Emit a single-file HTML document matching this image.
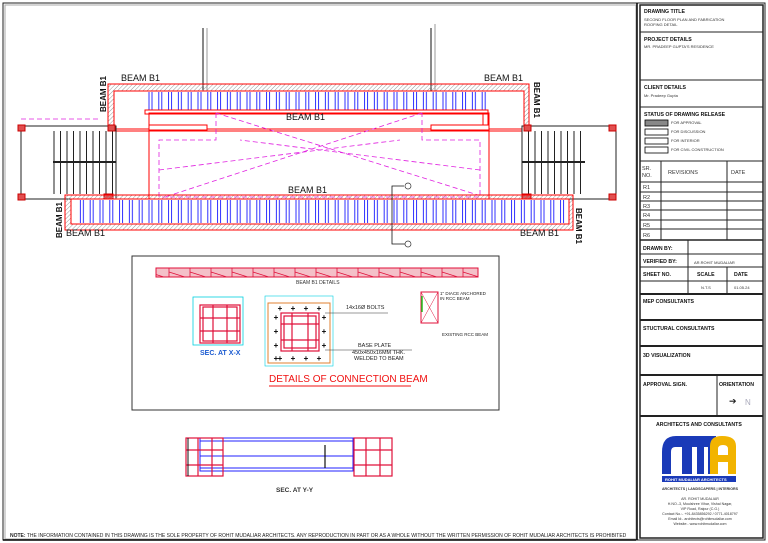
<!DOCTYPE html>
<html><head><meta charset="utf-8"><style>
html,body{margin:0;padding:0;background:#fff;}
svg{display:block;font-family:"Liberation Sans",sans-serif;}
</style></head><body>
<svg width="768" height="543" viewBox="0 0 768 543" xmlns="http://www.w3.org/2000/svg">
<defs>
<pattern id="bars" x="0" y="0" width="9.8" height="40" patternUnits="userSpaceOnUse">
<rect x="2" y="-1" width="3" height="42" fill="none" stroke="#1a1aff" stroke-width="0.9"/>
</pattern>
<pattern id="hatch" width="3" height="3" patternUnits="userSpaceOnUse" patternTransform="rotate(45)">
<line x1="0" y1="0" x2="0" y2="3" stroke="#999" stroke-width="1"/>
</pattern>
<pattern id="stairs" width="6.5" height="80" patternUnits="userSpaceOnUse">
<line x1="2" y1="0" x2="2" y2="80" stroke="#222" stroke-width="1"/>
</pattern>
<pattern id="rbars" width="21" height="10" patternUnits="userSpaceOnUse">
<path d="M1 0 V10 M1 2 L20 8" stroke="#e0103a" stroke-width="0.8" fill="none"/>
</pattern>
</defs>
<rect width="768" height="543" fill="#fff"/>
<rect x="3" y="3" width="762" height="537" fill="none" stroke="#222" stroke-width="1"/>
<rect x="5" y="5" width="631" height="534" fill="none" stroke="#aaa" stroke-width="1"/>
<line x1="3" y1="540" x2="636" y2="540" stroke="#000" stroke-width="1.5"/>
<line x1="637" y1="3" x2="637" y2="540" stroke="#000" stroke-width="1.5"/>

<g stroke="#111" stroke-width="1"><line x1="203" y1="28" x2="203" y2="107"/><line x1="207" y1="28" x2="207" y2="107" stroke="#999"/><line x1="431" y1="28" x2="431" y2="107"/><line x1="435" y1="24" x2="435" y2="107" stroke="#999"/></g>

<!-- top beam -->
<rect x="108" y="84" width="421" height="46" fill="url(#hatch)"/>
<rect x="114" y="91" width="410" height="39" fill="#fff"/>
<rect x="108" y="84" width="421" height="45" fill="none" stroke="#f00"/>
<rect x="114" y="91" width="410" height="40" fill="none" stroke="#f00"/>
<rect x="145" y="92" width="343" height="18" fill="url(#bars)"/>
<rect x="145" y="110" width="343" height="4" fill="none" stroke="#f00"/>
<line x1="483" y1="114" x2="483" y2="126" stroke="#f00"/><line x1="488" y1="114" x2="488" y2="126" stroke="#f00"/>
<!-- void -->
<rect x="149" y="113" width="340" height="87" fill="none" stroke="#f00"/>
<g stroke="#e020e0" stroke-width="0.8" stroke-dasharray="5,3" fill="none">
<path d="M21 119 H101"/><path d="M216 113 V140 H159 V197 H480 V140 H422 V113"/>
<line x1="216" y1="113" x2="478" y2="195"/><line x1="422" y1="113" x2="165" y2="197"/>
<line x1="159" y1="170" x2="400" y2="140"/><line x1="480" y1="170" x2="240" y2="140"/>
</g>
<rect x="149" y="125" width="58" height="5" fill="#fff" stroke="#f00"/>
<rect x="431" y="125" width="58" height="5" fill="#fff" stroke="#f00"/>
<!-- stairs -->
<rect x="21" y="126" width="95" height="73" fill="#fff" stroke="#222"/>
<rect x="53" y="131" width="63" height="63" fill="url(#stairs)"/>
<line x1="53" y1="162" x2="116" y2="162" stroke="#222" stroke-width="2"/>
<rect x="522" y="126" width="94" height="73" fill="#fff" stroke="#222"/>
<rect x="522" y="131" width="63" height="63" fill="url(#stairs)"/>
<line x1="522" y1="162" x2="585" y2="162" stroke="#222" stroke-width="2"/>
<g fill="#e05050" stroke="#c00"><rect x="18" y="125" width="7" height="6"/><rect x="108" y="125" width="7" height="6"/><rect x="18" y="194" width="7" height="6"/><rect x="104" y="194" width="9" height="6"/><rect x="524" y="125" width="7" height="6"/><rect x="609" y="125" width="7" height="6"/><rect x="522" y="194" width="9" height="6"/><rect x="609" y="194" width="7" height="6"/></g>
<!-- bottom beam -->
<rect x="65" y="195" width="508" height="35" fill="url(#hatch)"/>
<rect x="65" y="195" width="508" height="35" fill="none" stroke="#f00"/>
<rect x="71" y="199" width="498" height="25" fill="#fff" stroke="#f00"/>
<rect x="76" y="200" width="493" height="23" fill="url(#bars)"/>
<path d="M404 186 H392 V244 H405" fill="none" stroke="#111" stroke-width="0.8"/>
<circle cx="408" cy="186" r="3" fill="#fff" stroke="#333" stroke-width="0.7"/>
<circle cx="408" cy="244" r="3" fill="#fff" stroke="#333" stroke-width="0.7"/>
<g font-size="9" fill="#111">
<text x="121" y="81">BEAM B1</text><text x="484" y="81">BEAM B1</text>
<text x="286" y="120">BEAM B1</text><text x="288" y="193">BEAM B1</text>
<text x="66" y="236">BEAM B1</text><text x="520" y="236">BEAM B1</text>
<text transform="translate(106,112) rotate(-90)" font-size="8" font-weight="bold">BEAM B1</text>
<text transform="translate(62,238) rotate(-90)" font-size="8" font-weight="bold">BEAM B1</text>
<text transform="translate(534,82) rotate(90)" font-size="8" font-weight="bold">BEAM B1</text>
<text transform="translate(576,208) rotate(90)" font-size="8" font-weight="bold">BEAM B1</text>
</g>

<!-- detail box -->
<rect x="132" y="256" width="367" height="154" fill="none" stroke="#333"/>
<rect x="156" y="268" width="322" height="9" fill="#f4c0c8" stroke="#e0103a"/>
<rect x="156" y="268" width="322" height="9" fill="url(#rbars)"/>
<text x="296" y="284" font-size="5" fill="#333">BEAM B1 DETAILS</text>
<rect x="193" y="297" width="50" height="48" fill="none" stroke="#00d0e0" stroke-width="0.8"/>
<g stroke="#e0103a" stroke-width="1.2" fill="none"><rect x="200" y="305" width="40" height="38"/><rect x="203" y="307" width="34" height="34"/><line x1="200" y1="318" x2="240" y2="318"/><line x1="200" y1="331" x2="240" y2="331"/><line x1="213" y1="305" x2="213" y2="343"/><line x1="227" y1="305" x2="227" y2="343"/></g>
<text x="200" y="355" font-size="7" fill="#1a5ad0" font-weight="bold">SEC. AT X-X</text>
<rect x="268" y="303" width="62" height="60" fill="none" stroke="#e08030"/>
<rect x="265" y="296" width="68" height="70" fill="none" stroke="#00d0e0" stroke-width="0.6"/>
<g stroke="#e0103a" stroke-width="1.2" fill="none"><rect x="281" y="313" width="38" height="38"/><rect x="284" y="316" width="32" height="32"/><line x1="281" y1="324" x2="319" y2="324"/><line x1="281" y1="340" x2="319" y2="340"/><line x1="292" y1="313" x2="292" y2="351"/><line x1="308" y1="313" x2="308" y2="351"/></g>
<g font-size="8" fill="#000" text-anchor="middle" font-weight="bold">
<text x="280" y="311">+</text><text x="293" y="311">+</text><text x="306" y="311">+</text><text x="319" y="311">+</text>
<text x="276" y="320">+</text><text x="276" y="334">+</text><text x="276" y="348">+</text><text x="276" y="361">+</text>
<text x="324" y="320">+</text><text x="324" y="334">+</text><text x="324" y="348">+</text>
<text x="280" y="361">+</text><text x="293" y="361">+</text><text x="306" y="361">+</text><text x="319" y="361">+</text>
</g>
<line x1="325" y1="313" x2="388" y2="313" stroke="#333" stroke-width="0.6"/>
<line x1="325" y1="350" x2="412" y2="350" stroke="#333" stroke-width="0.6"/>
<g font-size="5.5" fill="#222"><text x="346" y="309">14x16Ø BOLTS</text><text x="358" y="347">BASE PLATE</text><text x="352" y="354">450x450x16MM THK.</text><text x="354" y="360">WELDED TO BEAM</text></g>
<rect x="421" y="292" width="17" height="31" fill="none" stroke="#e0103a"/>
<path d="M421 292 L438 323 M438 292 L421 323" stroke="#e0103a" stroke-width="0.5"/>
<line x1="422" y1="296" x2="422" y2="312" stroke="#20c020" stroke-width="1.5"/>
<g font-size="4.5" fill="#222"><text x="440" y="295">1" DIACE ANCHORED</text><text x="440" y="300">IN RCC BEAM</text><text x="442" y="336">EXISTING RCC BEAM</text></g>
<text x="269" y="382" font-size="10" fill="#f01010">DETAILS OF CONNECTION BEAM</text>
<line x1="269" y1="386" x2="411" y2="386" stroke="#f01010"/>
<!-- sec y-y -->
<rect x="200" y="438" width="153" height="18" fill="none" stroke="#2020ff"/>
<rect x="200" y="441" width="153" height="30" fill="none" stroke="#2020ff"/>
<line x1="200" y1="468" x2="353" y2="468" stroke="#2020ff"/>
<g stroke="#e0103a" stroke-width="1.2" fill="none">
<rect x="186" y="438" width="37" height="38"/><line x1="186" y1="450" x2="223" y2="450"/><line x1="186" y1="465" x2="223" y2="465"/><line x1="198" y1="438" x2="198" y2="476"/><line x1="212" y1="438" x2="212" y2="476"/>
<rect x="354" y="438" width="38" height="38"/><line x1="354" y1="450" x2="392" y2="450"/><line x1="354" y1="465" x2="392" y2="465"/><line x1="366" y1="438" x2="366" y2="476"/><line x1="380" y1="438" x2="380" y2="476"/>
</g>
<line x1="188" y1="438" x2="188" y2="476" stroke="#111"/>
<line x1="325" y1="445" x2="325" y2="468" stroke="#111" stroke-width="1.2"/>
<text x="276" y="492" font-size="6.5" fill="#333" font-weight="bold">SEC. AT Y-Y</text>

<text x="10" y="537" font-size="5" fill="#222"><tspan font-weight="bold">NOTE:</tspan> THE INFORMATION CONTAINED IN THIS DRAWING IS THE SOLE PROPERTY OF ROHIT MUDALIAR ARCHITECTS. ANY REPRODUCTION IN PART OR AS A WHOLE WITHOUT THE WRITTEN PERMISSION OF ROHIT MUDALIAR ARCHITECTS IS PROHIBITED</text>

<!-- title block -->
<g fill="none" stroke="#222" stroke-width="1">
<rect x="640" y="5" width="123" height="533" stroke-width="1.5"/>
<line x1="640" y1="32" x2="763" y2="32"/><line x1="640" y1="80" x2="763" y2="80"/>
<line x1="640" y1="107" x2="763" y2="107"/><line x1="640" y1="161" x2="763" y2="161"/>
<line x1="640" y1="182" x2="763" y2="182"/>
<line x1="640" y1="192" x2="763" y2="192"/><line x1="640" y1="201" x2="763" y2="201"/><line x1="640" y1="210" x2="763" y2="210"/><line x1="640" y1="220" x2="763" y2="220"/><line x1="640" y1="229" x2="763" y2="229"/>
<line x1="640" y1="240" x2="763" y2="240" stroke-width="1.5"/>
<line x1="661" y1="161" x2="661" y2="240"/><line x1="727" y1="161" x2="727" y2="240"/>
<line x1="640" y1="254" x2="763" y2="254"/><line x1="640" y1="267" x2="763" y2="267"/><line x1="640" y1="281" x2="763" y2="281"/>
<line x1="688" y1="240" x2="688" y2="294"/><line x1="727" y1="267" x2="727" y2="294"/>
<line x1="640" y1="294" x2="763" y2="294" stroke-width="2"/>
<line x1="640" y1="320" x2="763" y2="320" stroke-width="2"/><line x1="640" y1="346" x2="763" y2="346" stroke-width="2"/>
<line x1="640" y1="375" x2="763" y2="375" stroke-width="2"/><line x1="640" y1="416" x2="763" y2="416" stroke-width="2"/>
<line x1="717" y1="375" x2="717" y2="416"/>
</g>
<g fill="#fff" stroke="#000" stroke-width="0.8"><rect x="645" y="120" width="23" height="6" fill="#888"/><rect x="645" y="129" width="23" height="6"/><rect x="645" y="138" width="23" height="6"/><rect x="645" y="147" width="23" height="6"/></g>
<g font-size="5.2" font-weight="bold" fill="#111">
<text x="644" y="13">DRAWING TITLE</text><text x="644" y="41">PROJECT DETAILS</text><text x="644" y="89">CLIENT DETAILS</text><text x="644" y="116">STATUS OF DRAWING RELEASE</text>
<text x="643" y="250">DRAWN BY:</text><text x="643" y="263">VERIFIED BY:</text><text x="643" y="276">SHEET NO.</text><text x="697" y="276">SCALE</text><text x="734" y="276">DATE</text>
<text x="643" y="303">MEP CONSULTANTS</text><text x="643" y="330">STUCTURAL CONSULTANTS</text><text x="643" y="357">3D VISUALIZATION</text>
<text x="643" y="386">APPROVAL SIGN.</text><text x="719" y="386">ORIENTATION</text><text x="656" y="426">ARCHITECTS AND CONSULTANTS</text>
</g>
<g font-size="4" fill="#333">
<text x="644" y="21">SECOND FLOOR PLAN AND FABRICATION</text><text x="644" y="26">ROOFING DETAIL</text>
<text x="644" y="48">MR. PRADEEP GUPTA'S RESIDENCE</text><text x="644" y="97">Mr. Pradeep Gupta</text>
<text x="671" y="124">FOR APPROVAL</text><text x="671" y="133">FOR DISCUSSION</text><text x="671" y="142">FOR INTERIOR</text><text x="671" y="151">FOR CIVIL CONSTRUCTION</text>
<text x="694" y="264">AR.ROHIT MUDALIAR</text><text x="701" y="289">N.T.S</text><text x="734" y="289">01.05.24</text>
</g>
<g font-size="5.5" fill="#333">
<text x="642" y="170">SR.</text><text x="642" y="177">NO.</text><text x="668" y="174">REVISIONS</text><text x="731" y="174">DATE</text>
<text x="643" y="189">R1</text><text x="643" y="199">R2</text><text x="643" y="208">R3</text><text x="643" y="217">R4</text><text x="643" y="227">R5</text><text x="643" y="237">R6</text>
</g>
<text x="729" y="404" font-size="9" fill="#222">➔</text><text x="745" y="405" font-size="8" fill="#aab">N</text>
<g>
<path d="M662 474 V452 Q662 436 676 436 H690 V474 H682 V447 H675 Q671 447 671 452 V474 Z" fill="#1a3ab8"/>
<path d="M684 474 V436 H716 V474 H708 V447 H704 V474 H697 V447 H692 V474 Z" fill="#1a3ab8"/>
<path d="M710 474 V446 Q710 436 722 436 Q736 436 736 446 V474 H728 V462 H718 V474 Z M718 455 H728 V449 Q728 445 723 445 Q718 445 718 449 Z" fill="#f2b400"/>
<rect x="662" y="476" width="74" height="6" fill="#1a3ab8"/>
<text x="665" y="481" font-size="4" fill="#fff" font-weight="bold">ROHIT MUDALIAR ARCHITECTS</text>
</g>
<g font-size="3.6" fill="#333" text-anchor="middle">
<text x="700" y="490" font-weight="bold">ARCHITECTS | LANDSCAPERS | INTERIORS</text>
<text x="700" y="500">AR. ROHIT MUDALIAR</text><text x="700" y="505">H.NO.-3, Moulshree Vihar, Vishal Nagar,</text>
<text x="700" y="510">VIP Road, Raipur (C.G.)</text><text x="700" y="515">Contact No.:- +91-8435856292 / 0771-4018797</text>
<text x="700" y="520">Email Id:- architects@rohitmudaliar.com</text><text x="700" y="525">Website:- www.rohitmudaliar.com</text>
</g>
</svg>
</body></html>
